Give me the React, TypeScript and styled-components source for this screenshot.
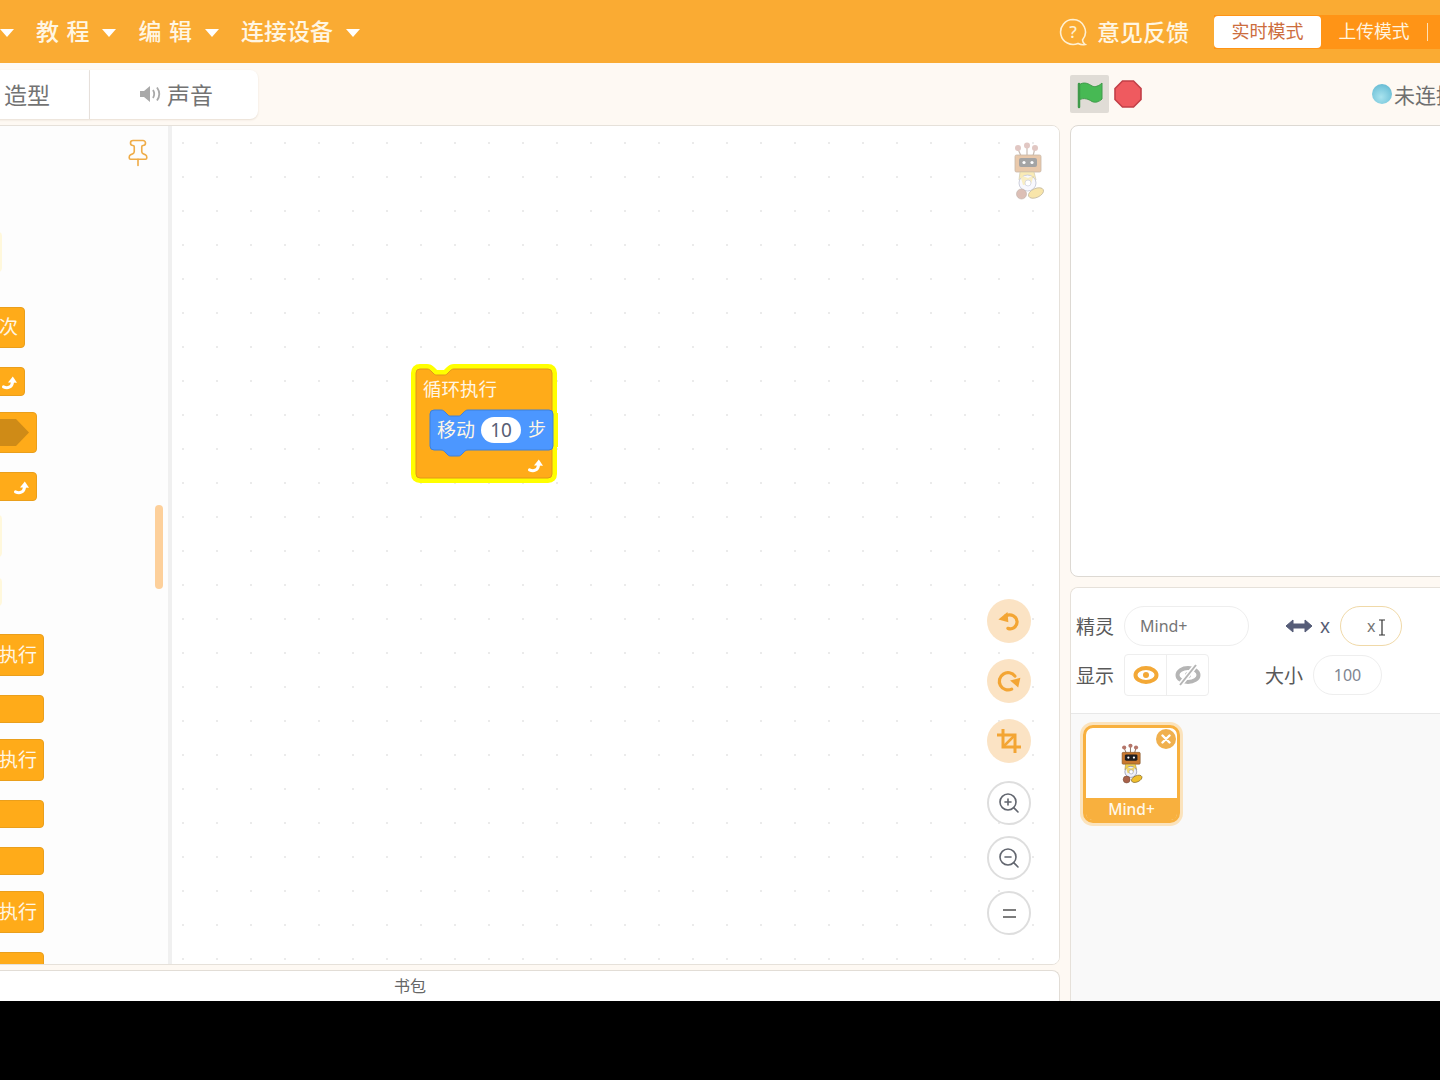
import styled, { createGlobalStyle } from "styled-components";
import { Pin, ZoomIn, ZoomOut } from "lucide-react";

const FONT = `"Noto Sans", "Noto Sans CJK SC", sans-serif`;

const GlobalStyle = createGlobalStyle`
  html, body {
    margin: 0;
    background: #000;
    font-family: ${FONT};
  }
  * {
    box-sizing: border-box;
  }
`;

const Shell = styled.div`
  width: 1440px;
  height: 1080px;
  overflow: hidden;
  background: #000;
`;

// 页面比窗口宽，左右两边都被裁掉
const Page = styled.div`
  width: 1680px;
  height: 1001px;
  margin-left: -240px;
  display: flex;
  flex-direction: column;
  background: #fef9f3;
`;

const MenuBar = styled.header`
  height: 63px;
  flex-shrink: 0;
  display: flex;
  align-items: center;
  justify-content: space-between;
  padding-left: 240px;
  background: #faab33;
  color: #fff6e3;
`;

const MenuGroup = styled.div`
  display: flex;
  align-items: center;
`;

const Caret = styled.span`
  width: 0;
  height: 0;
  margin: 2px 22px 0 0;
  border-left: 7.5px solid transparent;
  border-right: 7.5px solid transparent;
  border-top: 8px solid #fff;
`;

const MenuLabel = styled.span`
  margin-right: 13px;
  padding-bottom: 2px;
  font-size: 23px;
  font-weight: 500;
  line-height: 32px;
  word-spacing: 1.5px;
`;

const Feedback = styled.div`
  display: flex;
  align-items: center;
  gap: 10px;
  margin-right: 25px;
  font-size: 23px;
  font-weight: 500;
`;

const FeedbackText = styled.span`
  padding-bottom: 2px;
`;

const ModeSwitch = styled.div`
  width: 226px;
  height: 34px;
  display: flex;
  align-items: stretch;
  background: #ff9416;
`;

const ModeTab = styled.div<{ $active?: boolean }>`
  flex: 0 0 ${(p) => (p.$active ? 107 : 106)}px;
  display: flex;
  align-items: center;
  justify-content: center;
  padding-bottom: 3px;
  font-size: ${(p) => (p.$active ? 18 : 17.8)}px;
  border-radius: 4px;
  background: ${(p) => (p.$active ? "#fff" : "transparent")};
  color: ${(p) => (p.$active ? "#cc6d3e" : "#fff3df")};
  margin: ${(p) => (p.$active ? "1px 0" : "0")};
`;

const ModeRule = styled.span`
  width: 1px;
  height: 18px;
  align-self: center;
  background: #ffe0b5;
`;

const Body = styled.div`
  flex: 1;
  min-height: 0;
  display: flex;
  gap: 10px;
`;

const LeftColumn = styled.div`
  flex: 0 0 1300px;
  display: flex;
  flex-direction: column;
  min-width: 0;
`;

const TabRow = styled.div`
  height: 62px;
  flex-shrink: 0;
  display: flex;
  align-items: flex-start;
  padding: 7px 0 0 161px;
`;

const Tab = styled.div<{ $width: number; $paddingRight: number; $last?: boolean }>`
  width: ${(p) => p.$width}px;
  height: 49px;
  display: flex;
  align-items: center;
  justify-content: flex-end;
  gap: 5px;
  padding: 0 ${(p) => p.$paddingRight}px 2px 0;
  background: #fff;
  border-right: 1px solid ${(p) => (p.$last ? "transparent" : "#ebe7e2")};
  border-radius: ${(p) => (p.$last ? "0 8px 8px 0" : "0")};
  box-shadow: 0 1px 2px rgba(120, 90, 50, 0.16);
  color: #737373;
  font-size: 23px;
`;

const WorkspaceCard = styled.div`
  height: 840px;
  flex-shrink: 0;
  display: flex;
  overflow: hidden;
  background: #fff;
  border: 1px solid #e6e1da;
  border-radius: 0 8px 8px 0;
`;

const Palette = styled.aside`
  position: relative;
  flex: 0 0 411px;
  height: 838px;
  overflow: hidden;
  display: flex;
  flex-direction: column;
  align-items: flex-start;
  background: #fdfdfd;
  border-right: 4px solid #f0f0f0;
`;

const PinSlot = styled.div`
  position: absolute;
  top: 12px;
  right: 15px;
  color: #efac48;
  display: flex;
`;

const ScrollThumb = styled.div`
  position: absolute;
  top: 379px;
  right: 5px;
  width: 8px;
  height: 84px;
  border-radius: 4px;
  background: #fdd09b;
`;

const PaletteBlock = styled.div<{ $w: number; $h: number; $gap: number; $pale?: boolean }>`
  flex-shrink: 0;
  width: ${(p) => p.$w}px;
  height: ${(p) => p.$h}px;
  margin-top: ${(p) => p.$gap}px;
  display: flex;
  align-items: center;
  justify-content: flex-end;
  padding-right: 6px;
  border-radius: 4px;
  background: ${(p) => (p.$pale ? "#fff8dc" : "#ffab19")};
  border: ${(p) => (p.$pale ? "none" : "1px solid #ea9f1c")};
  color: #fff6e5;
  font-size: 19px;
  line-height: 1;
`;

const HexSlot = styled.span`
  width: 60px;
  height: 27px;
  margin-right: 1px;
  background: #cf8b17;
  clip-path: polygon(0 50%, 14px 0, calc(100% - 13px) 0, 100% 50%, calc(100% - 13px) 100%, 14px 100%);
`;

const Canvas = styled.div`
  position: relative;
  flex: 1;
  background-color: #fff;
  background-image: radial-gradient(circle, #ebebeb 0.9px, transparent 1.2px);
  background-size: 34px 34px;
  background-position: -6px 0;
`;

const Watermark = styled.div`
  position: absolute;
  top: 16px;
  right: 14px;
  opacity: 0.4;
  display: flex;
`;

const DroppedStack = styled.div`
  position: absolute;
  left: 239px;
  top: 237px;
  display: flex;
`;

const BlockText = styled.text`
  font-family: ${FONT};
  fill: #fff6e5;
`;

const CanvasTools = styled.div`
  position: absolute;
  right: 28px;
  bottom: 29px;
  display: flex;
  flex-direction: column;
  gap: 18px;
`;

const ToolGroup = styled.div<{ $gap: number }>`
  display: flex;
  flex-direction: column;
  gap: ${(p) => p.$gap}px;
`;

const ToolButton = styled.div<{ $outline?: boolean }>`
  width: 44px;
  height: 44px;
  border-radius: 50%;
  display: flex;
  align-items: center;
  justify-content: center;
  background: ${(p) => (p.$outline ? "#fff" : "#fbe3c4")};
  border: ${(p) => (p.$outline ? "2px solid #dedede" : "none")};
  color: ${(p) => (p.$outline ? "#62666f" : "#f3a534")};
`;

const EqualBars = styled.span`
  width: 13px;
  height: 9px;
  border-top: 2.5px solid #7d7d7d;
  border-bottom: 2.5px solid #7d7d7d;
`;

const Backpack = styled.div`
  height: 31px;
  margin-top: 5px;
  flex-shrink: 0;
  display: flex;
  align-items: center;
  justify-content: center;
  padding-bottom: 3px;
  background: #fff;
  border: 1px solid #e2ddd6;
  border-bottom: none;
  border-radius: 8px 8px 0 0;
  color: #666;
  font-size: 16px;
`;

const RightColumn = styled.div`
  flex: 0 0 610px;
  display: flex;
  flex-direction: column;
  min-width: 0;
`;

const StageBar = styled.div`
  height: 62px;
  flex-shrink: 0;
  display: flex;
  align-items: center;
  gap: 5px;
`;

const FlagButton = styled.div`
  width: 39px;
  height: 38px;
  display: flex;
  align-items: center;
  justify-content: center;
  background: #e0dcd6;
  border-radius: 2px;
`;

const ConnectStatus = styled.div`
  margin-left: 225px;
  display: flex;
  align-items: center;
  gap: 2px;
  color: #6f6f6f;
  font-size: 21px;
  white-space: nowrap;
`;

const StatusDot = styled.span`
  width: 20px;
  height: 20px;
  border-radius: 50%;
  background: radial-gradient(circle at 45% 65%, #a9e3ee 0%, #7cc9dd 55%, #55aeca 100%);
`;

const Stage = styled.div`
  height: 452px;
  flex-shrink: 0;
  background: #fff;
  border: 1px solid #ddd9d3;
  border-radius: 8px 0 0 8px;
`;

const SpritePanel = styled.section`
  flex: 1;
  min-height: 0;
  margin-top: 10px;
  display: flex;
  flex-direction: column;
  overflow: hidden;
  border: 1px solid #e6e1da;
  border-bottom: none;
  border-radius: 8px 0 0 0;
`;

const SpriteInfo = styled.div`
  height: 126px;
  flex-shrink: 0;
  display: flex;
  flex-direction: column;
  gap: 8px;
  padding: 17px 0 0 5px;
  background: #fff;
  border-bottom: 1px solid #e8e8e8;
`;

const InfoRow = styled.div`
  display: flex;
  align-items: center;
  height: 41px;
`;

const InfoLabel = styled.span<{ $left?: number }>`
  width: 39px;
  margin: 0 9px 0 ${(p) => p.$left ?? 0}px;
  color: #595959;
  font-size: 19px;
  white-space: nowrap;
`;

const FieldWrap = styled.div`
  position: relative;
  display: flex;
`;

const Field = styled.input<{ $width: number; $focused?: boolean; $center?: boolean; $pad?: number }>`
  width: ${(p) => p.$width}px;
  height: 40px;
  padding: 0 ${(p) => (p.$center ? 0 : 8)}px 0 ${(p) => p.$pad ?? 0}px;
  text-align: ${(p) => (p.$center ? "center" : "left")};
  border: 1px solid ${(p) => (p.$focused ? "#f0d9a8" : "#eeeeee")};
  border-radius: 20px;
  outline: none;
  background: #fff;
  color: #808591;
  font-family: ${FONT};
  font-size: 16px;
`;

const TextCursor = styled.svg`
  position: absolute;
  top: 13px;
  left: 38px;
`;

const AxisGroup = styled.div`
  margin-left: 37px;
  display: flex;
  align-items: center;
  gap: 8px;
  color: #575e75;
  font-size: 19px;
`;

const AxisName = styled.span`
  margin-right: 2px;
`;

const VisibilityToggle = styled.div`
  display: flex;
  width: 85px;
  height: 42px;
  border: 1px solid #eeeeee;
  border-radius: 4px;
`;

const VisibilityCell = styled.div<{ $divider?: boolean }>`
  flex: 1;
  display: flex;
  align-items: center;
  justify-content: center;
  border-right: ${(p) => (p.$divider ? "1px solid #eeeeee" : "none")};
`;

const SpriteList = styled.div`
  flex: 1;
  padding: 11px 0 0 12px;
  background: #f9f9f9;
`;

const SpriteCard = styled.div`
  position: relative;
  width: 97px;
  height: 98px;
  display: flex;
  flex-direction: column;
  border: 3px solid #f8b03e;
  border-radius: 10px;
  background: #fff;
  box-shadow: 0 0 0 3px #fbe3bd;
`;

const SpriteThumb = styled.div`
  flex: 1;
  display: flex;
  align-items: center;
  justify-content: center;
`;

const SpriteName = styled.div`
  height: 22px;
  display: flex;
  align-items: center;
  justify-content: center;
  padding-bottom: 1px;
  background: #f8b03e;
  border-radius: 0 0 6px 6px;
  color: #fff8ea;
  font-size: 15.5px;
  font-weight: 500;
`;

const SpriteDelete = styled.div`
  position: absolute;
  top: 1px;
  right: 1px;
  width: 20px;
  height: 20px;
  display: flex;
  align-items: center;
  justify-content: center;
  border-radius: 50%;
  background: #f0b04e;
`;

const LoopArrow = ({ size = 16 }: { size?: number }) => (
  <svg width={size} height={size} viewBox="0 0 16 16">
    <path d="M1.5 12.8c4 2 8.200.6 9-4.300" fill="none" stroke="#fff" strokeWidth="3" strokeLinecap="round" />
    <path d="M6 8.500 10.800 2.500 15 8.800z" fill="#fff" />
  </svg>
);

const Robot = ({ width, height }: { width: number; height: number }) => (
  <svg width={width} height={height} viewBox="0 0 33 58">
    <g stroke="#7a5a44" strokeWidth="1.200" fill="none">
      <path d="M9 14 6 7M15 13V4M21 14l2-8" />
    </g>
    <circle cx="6" cy="6" r="3" fill="#b5766a" />
    <circle cx="15" cy="3.500" r="3" fill="#b5766a" />
    <circle cx="23" cy="6" r="3" fill="#b5766a" />
    <rect x="3" y="13" width="26" height="17" rx="1.500" fill="#c9792f" stroke="#7a5028" strokeWidth="0.800" />
    <rect x="7" y="16" width="18" height="9" rx="2" fill="#1d1d1f" />
    <circle cx="12" cy="20.500" r="1.600" fill="#fff" />
    <circle cx="20" cy="20.500" r="1.600" fill="#fff" />
    <path d="M8 30h14l2 8H7z" fill="#f3cf4a" stroke="#8b7a3a" strokeWidth="0.700" />
    <ellipse cx="15.500" cy="41" rx="8.500" ry="8" fill="#eef0fb" stroke="#8186a6" strokeWidth="1" />
    <path d="M8 33l8 3 6-3-3 9-8 1z" fill="#f3cf4a" opacity="0.800" />
    <circle cx="16" cy="41" r="3" fill="#fff" stroke="#8186a6" strokeWidth="0.700" />
    <ellipse cx="9.500" cy="52" rx="5" ry="5" fill="#a9624a" stroke="#5d3a2a" strokeWidth="0.600" />
    <ellipse cx="24" cy="51" rx="8" ry="4.500" transform="rotate(-24 24 51)" fill="#f0bf2e" stroke="#6f5518" strokeWidth="0.800" />
  </svg>
);

const UndoIcon = () => (
  <svg width="26" height="26" viewBox="0 0 24 24">
    <path d="M9 7.200c5-2.400 10.500.7 10.500 5.600 0 4.800-4.600 7.400-8.500 6" fill="none" stroke="currentColor" strokeWidth="3" strokeLinecap="round" />
    <path d="M2.200 10.600 10.600 3.600l.8 9.600z" fill="currentColor" />
  </svg>
);

const RedoIcon = () => (
  <svg width="26" height="26" viewBox="0 0 24 24">
    <path d="M14.500 19.500a8 8 0 1 1 3-12" fill="none" stroke="currentColor" strokeWidth="3" strokeLinecap="round" />
    <path d="M13 11.500 22.500 9l-2 9z" fill="currentColor" />
  </svg>
);

const CropIcon = () => (
  <svg width="24" height="24" viewBox="0 0 24 24" fill="none" stroke="currentColor" strokeWidth="3">
    <path d="M6 1v17h17M1 6h17v17" strokeLinecap="square" />
    <path d="M6 18 18 6" strokeWidth="2.500" />
  </svg>
);

const EyeIcon = () => (
  <svg width="26" height="20" viewBox="0 0 26 20">
    <ellipse cx="13" cy="10" rx="10.500" ry="7" fill="none" stroke="#f3a836" strokeWidth="4" />
    <circle cx="13" cy="10" r="3" fill="#f3a836" />
  </svg>
);

const EyeOffIcon = () => (
  <svg width="26" height="26" viewBox="0 0 26 26">
    <ellipse cx="13" cy="13" rx="10.500" ry="7" fill="none" stroke="#b5b5b5" strokeWidth="4" />
    <circle cx="13" cy="13" r="3" fill="#b5b5b5" />
    <path d="M5 23 21 3" stroke="#fff" strokeWidth="5" />
    <path d="M5 23 21 3" stroke="#b5b5b5" strokeWidth="2" />
  </svg>
);

const paletteBlocks = [
  { gap: 106, h: 40, w: 241, pale: true },
  { gap: 35, h: 41, w: 264, text: "次" },
  { gap: 19, h: 29, w: 264, arrow: true },
  { gap: 16, h: 41, w: 276, hex: true },
  { gap: 19, h: 29, w: 276, arrow: true },
  { gap: 14, h: 42, w: 241, pale: true },
  { gap: 21, h: 28, w: 241, pale: true },
  { gap: 28, h: 42, w: 283, text: "执行" },
  { gap: 19, h: 28, w: 283 },
  { gap: 16, h: 42, w: 283, text: "执行" },
  { gap: 19, h: 28, w: 283 },
  { gap: 19, h: 28, w: 283 },
  { gap: 16, h: 42, w: 283, text: "执行" },
  { gap: 19, h: 42, w: 283 },
];

const App = () => {
  return (
    <Shell>
      <GlobalStyle />
      <Page>
        <MenuBar>
          <MenuGroup>
            <Caret />
            <MenuLabel>教 程</MenuLabel>
            <Caret />
            <MenuLabel>编 辑</MenuLabel>
            <Caret />
            <MenuLabel>连接设备</MenuLabel>
            <Caret />
          </MenuGroup>
          <MenuGroup>
            <Feedback>
              <svg width="28" height="28" viewBox="0 0 28 28">
                <path
                  d="M14 1.500a12.500 12.500 0 1 0 5 24c2 1 4.500 1.500 7 1-1.500-1-2.300-2.500-2.500-4.500A12.500 12.500 0 0 0 14 1.500z"
                  fill="none"
                  stroke="#fff0d2"
                  strokeWidth="1.600"
                />
                <text x="14" y="20" textAnchor="middle" fontSize="17" fontFamily={FONT} fill="#fff0d2">
                  ?
                </text>
              </svg>
              <FeedbackText>意见反馈</FeedbackText>
            </Feedback>
            <ModeSwitch>
              <ModeTab $active>实时模式</ModeTab>
              <ModeTab>上传模式</ModeTab>
              <ModeRule />
            </ModeSwitch>
          </MenuGroup>
        </MenuBar>
        <Body>
          <LeftColumn>
            <TabRow>
              <Tab $width={169} $paddingRight={39}>
                造型
              </Tab>
              <Tab $width={168} $paddingRight={44} $last>
                <svg width="22" height="18" viewBox="0 0 22 18">
                  <path d="M0 6h4l6-5v16l-6-5H0z" fill="#a9a9a9" />
                  <path d="M13 5c1.500 2.500 1.500 5.500 0 8M17 2.500c2.800 4 2.800 9 0 13" fill="none" stroke="#a9a9a9" strokeWidth="1.800" />
                </svg>
                声音
              </Tab>
            </TabRow>
            <WorkspaceCard>
              <Palette>
                {paletteBlocks.map((b, i) => (
                  <PaletteBlock key={i} $w={b.w} $h={b.h} $gap={b.gap} $pale={b.pale}>
                    {b.text}
                    {b.arrow && <LoopArrow />}
                    {b.hex && <HexSlot />}
                  </PaletteBlock>
                ))}
                <PinSlot>
                  <Pin size={30} strokeWidth={1.300} />
                </PinSlot>
                <ScrollThumb />
              </Palette>
              <Canvas>
                <Watermark>
                  <Robot width={33} height={58} />
                </Watermark>
                <DroppedStack>
                  <svg width="147" height="122" viewBox="0 0 147 122">
                    <g fill="#ff0" stroke="#ff0" strokeWidth="10" strokeLinejoin="round">
                      <path d="M5 10q0-4 4-4h7c2 0 3 1 4 2l3 3c1 1 2 1 3 1h7c1 0 2 0 3-1l3-3c1-1 2-2 4-2h94q4 0 4 4v101q0 4-4 4H9q-4 0-4-4z" />
                      <path d="M142 50v34" />
                    </g>
                    <path
                      d="M5 10q0-4 4-4h7c2 0 3 1 4 2l3 3c1 1 2 1 3 1h7c1 0 2 0 3-1l3-3c1-1 2-2 4-2h94q4 0 4 4v101q0 4-4 4H9q-4 0-4-4z"
                      fill="#ffab19"
                      stroke="#e0961a"
                    />
                    <path
                      d="M19 51q0-4 4-4h7c2 0 3 1 4 2l3 3c1 1 2 1 3 1h7c1 0 2 0 3-1l3-3c1-1 2-2 4-2h81q4 0 4 4v32q0 4-4 4H57c-2 0-3 1-4 2l-3 3c-1 1-2 1-3 1h-7c-1 0-2 0-3-1l-3-3c-1-1-2-2-4-2H23q-4 0-4-4z"
                      fill="#4c97ff"
                      stroke="#3f80d8"
                    />
                    <BlockText x="12" y="33" fontSize="18.500">
                      循环执行
                    </BlockText>
                    <BlockText x="26" y="74" fontSize="19">
                      移动
                    </BlockText>
                    <rect x="70" y="54" width="40" height="26" rx="13" fill="#fff" />
                    <text x="90" y="74" textAnchor="middle" fontSize="19" fontFamily={FONT} fill="#575e75">
                      10
                    </text>
                    <BlockText x="117" y="73" fontSize="18">
                      步
                    </BlockText>
                    <g transform="translate(117 94)">
                      <LoopArrow />
                    </g>
                  </svg>
                </DroppedStack>
                <CanvasTools>
                  <ToolGroup $gap={16}>
                    <ToolButton>
                      <UndoIcon />
                    </ToolButton>
                    <ToolButton>
                      <RedoIcon />
                    </ToolButton>
                    <ToolButton>
                      <CropIcon />
                    </ToolButton>
                  </ToolGroup>
                  <ToolGroup $gap={11}>
                    <ToolButton $outline>
                      <ZoomIn size={24} strokeWidth={1.600} />
                    </ToolButton>
                    <ToolButton $outline>
                      <ZoomOut size={24} strokeWidth={1.600} />
                    </ToolButton>
                    <ToolButton $outline>
                      <EqualBars />
                    </ToolButton>
                  </ToolGroup>
                </CanvasTools>
              </Canvas>
            </WorkspaceCard>
            <Backpack>书包</Backpack>
          </LeftColumn>
          <RightColumn>
            <StageBar>
              <FlagButton>
                <svg width="30" height="30" viewBox="0 0 30 30">
                  <path d="M4 6C9 2 14 5 17 7c3 1.500 7 0 10-3v16c-3 3-7 4-10 2.500C14 20.500 9 18 4 21z" fill="#47b954" stroke="#3f9a4a" strokeWidth="1" />
                  <path d="M4 5v23" stroke="#3f9a4a" strokeWidth="2.500" strokeLinecap="round" />
                </svg>
              </FlagButton>
              <svg width="28" height="28" viewBox="0 0 28 28">
                <path d="M8.500 1h11L27 8.500v11L19.500 27h-11L1 19.500v-11z" fill="#ef5a5f" stroke="#c23f47" strokeWidth="1.600" />
              </svg>
              <ConnectStatus>
                <StatusDot />
                未连接设备
              </ConnectStatus>
            </StageBar>
            <Stage />
            <SpritePanel>
              <SpriteInfo>
                <InfoRow>
                  <InfoLabel>精灵</InfoLabel>
                  <Field $width={125} $pad={15} readOnly placeholder="Mind+" />
                  <AxisGroup>
                    <svg width="26" height="14" viewBox="0 0 26 14">
                      <path d="M0 7 7 1v4h12V1l7 6-7 6V9H7v4z" fill="#565d78" stroke="#565d78" strokeLinejoin="round" />
                    </svg>
                    <AxisName>x</AxisName>
                    <FieldWrap>
                      <Field $width={62} $pad={26} $focused readOnly placeholder="x" />
                      <TextCursor width="8" height="17" viewBox="0 0 8 17">
                        <path d="M1 1h6M4 1v15M1 16h6" fill="none" stroke="#333" strokeWidth="1.200" />
                      </TextCursor>
                    </FieldWrap>
                  </AxisGroup>
                </InfoRow>
                <InfoRow>
                  <InfoLabel>显示</InfoLabel>
                  <VisibilityToggle>
                    <VisibilityCell $divider>
                      <EyeIcon />
                    </VisibilityCell>
                    <VisibilityCell>
                      <EyeOffIcon />
                    </VisibilityCell>
                  </VisibilityToggle>
                  <InfoLabel $left={56}>大小</InfoLabel>
                  <Field $width={69} $center readOnly value="100" />
                </InfoRow>
              </SpriteInfo>
              <SpriteList>
                <SpriteCard>
                  <SpriteThumb>
                    <Robot width={23} height={41} />
                  </SpriteThumb>
                  <SpriteName>Mind+</SpriteName>
                  <SpriteDelete>
                    <svg width="10" height="10" viewBox="0 0 10 10">
                      <path d="M1.500 1.500l7 7M8.500 1.500l-7 7" stroke="#fff" strokeWidth="2.400" strokeLinecap="round" />
                    </svg>
                  </SpriteDelete>
                </SpriteCard>
              </SpriteList>
            </SpritePanel>
          </RightColumn>
        </Body>
      </Page>
    </Shell>
  );
};

export default App;
